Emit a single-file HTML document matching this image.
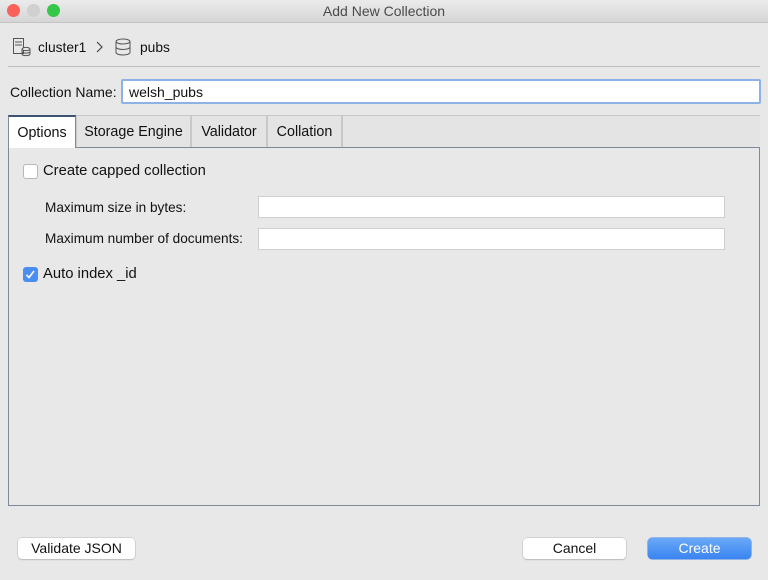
<!DOCTYPE html>
<html><head><style>
body{margin:0;width:768px;height:580px;background:#e8e8e8;font-family:"Liberation Sans",sans-serif;font-size:13.8px;color:#111;position:relative;overflow:hidden}
.a{position:absolute}
.title{left:0;top:0;width:768px;height:22px;background:linear-gradient(#ebebeb,#d6d6d6);border-bottom:1px solid #c4c4c4;text-align:center;line-height:23px;color:#4a4a4a;font-size:14px}
.dot{width:13px;height:13px;border-radius:50%;top:4px}
.inp{background:#fff;border:1px solid #cfcfcf}
.tab{top:115px;height:32px;line-height:33px;text-align:center;background:#e4e4e4;border:1px solid #c8c8c8;border-bottom:none;box-sizing:border-box;font-size:14.3px}
.cb{width:15px;height:15px;border-radius:3px;box-sizing:border-box}
.btn{background:#fff;border-radius:4px;box-shadow:0 0 0 0.5px #bbb,0 1px 1px #bbb;text-align:center;line-height:21px;height:21px;font-size:14px}
</style></head><body>
<div class="a title">Add New Collection</div>
<div class="a dot" style="left:7px;background:#fc605b"></div>
<div class="a dot" style="left:27px;background:#d0d0d0"></div>
<div class="a dot" style="left:47px;background:#35c748"></div>
<svg class="a" style="left:12px;top:37px" width="20" height="20" viewBox="0 0 20 20" fill="none" stroke="#555" stroke-width="1"><rect x="1.5" y="1.5" width="10" height="15"/><line x1="3" y1="5" x2="10" y2="5"/><line x1="3" y1="8" x2="10" y2="8"/><ellipse cx="14" cy="12" rx="4" ry="1.6" fill="#e8e8e8"/><path d="M10 12v5c0 1 2 1.6 4 1.6s4-.6 4-1.6v-5M10 14.5c0 1 2 1.6 4 1.6s4-.6 4-1.6"/></svg>
<div class="a" style="left:38px;top:40px">cluster1</div>
<svg class="a" style="left:96px;top:41px" width="8" height="12"><path d="M1 1l5 5-5 5" stroke="#444" fill="none" stroke-width="1.2"/></svg>
<svg class="a" style="left:114px;top:38px" width="18" height="18" viewBox="0 0 18 18" fill="none" stroke="#555"><ellipse cx="9" cy="3.5" rx="7" ry="2.5"/><path d="M2 3.5v11c0 1.4 3 2.5 7 2.5s7-1.1 7-2.5v-11M2 9c0 1.4 3 2.5 7 2.5s7-1.1 7-2.5"/></svg>
<div class="a" style="left:140px;top:40px">pubs</div>
<div class="a" style="left:8px;top:66px;width:752px;height:1px;background:#bdbdbd"></div>
<div class="a" style="left:10px;top:84px;font-size:14px">Collection Name:</div>
<div class="a inp" style="left:121px;top:79px;height:21px;border:2px solid #8db3e6;border-radius:2px;line-height:22px;padding-left:6px;width:630px;font-size:14px">welsh_pubs</div>
<div class="a" style="left:8px;top:147px;width:750px;height:357px;border:1px solid #7d8a99;background:#e8e8e8"></div>
<div class="a tab" style="left:8px;width:68px;background:#fff;border-top:2px solid #3d5573;border-color:#7d8a99;border-top-color:#3d5573;height:33px">Options</div>
<div class="a tab" style="left:76px;width:115px">Storage Engine</div>
<div class="a tab" style="left:191px;width:76px">Validator</div>
<div class="a tab" style="left:267px;width:75px">Collation</div>
<div class="a tab" style="left:342px;width:418px;border-left:1px solid #c8c8c8;border-right:none;border-top:1px solid #c8c8c8"></div>
<div class="a cb" style="left:23px;top:164px;background:#fff;border:1px solid #b8b8b8"></div>
<div class="a" style="left:43px;top:163px;font-size:14.8px">Create capped collection</div>
<div class="a" style="left:45px;top:200px;font-size:13.6px">Maximum size in bytes:</div>
<div class="a inp" style="left:258px;top:196px;width:465px;height:20px"></div>
<div class="a" style="left:45px;top:231px;font-size:13.6px">Maximum number of documents:</div>
<div class="a inp" style="left:258px;top:228px;width:465px;height:20px"></div>
<div class="a cb" style="left:23px;top:267px;background:#4b8ef2"><svg width="15" height="15"><path d="M3.5 8l2.5 2.5 5-6.5" stroke="#fff" stroke-width="1.6" fill="none"/></svg></div>
<div class="a" style="left:43px;top:266px;font-size:14.8px">Auto index _id</div>
<div class="a btn" style="left:18px;top:538px;width:117px">Validate JSON</div>
<div class="a btn" style="left:523px;top:538px;width:103px">Cancel</div>
<div class="a btn" style="left:648px;top:538px;width:103px;background:linear-gradient(#6aa9f8,#3a84f1);color:#fff;box-shadow:0 0 0 0.5px #3a7fe0">Create</div>
</body></html>
